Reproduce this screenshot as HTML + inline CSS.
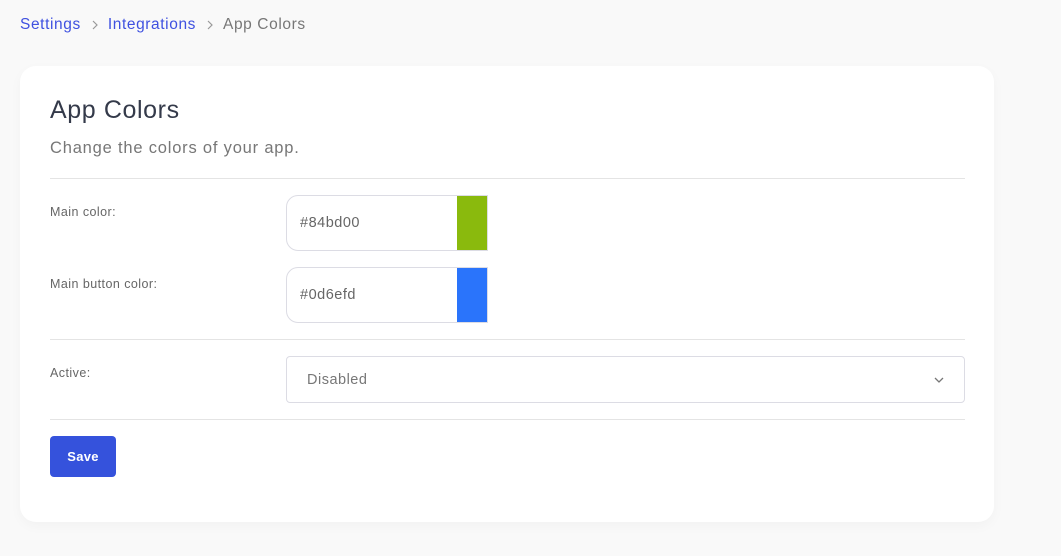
<!DOCTYPE html>
<html><head><style>
*{box-sizing:border-box;margin:0;padding:0}
body{width:1061px;height:556px;background:#f9f9f9;font-family:"Liberation Sans",sans-serif;position:relative;overflow:hidden}
.a{position:absolute}
.bc{top:16px;left:20px;font-size:15.5px;color:#777;letter-spacing:.6px;white-space:nowrap}
.bc span.l{color:#3f51e0}
.bc svg{margin:0 10px 0 11px;vertical-align:-1px}
.card{left:20px;top:66px;width:974px;height:456px;background:#fff;border-radius:16px;box-shadow:0 4px 12px rgba(0,0,0,.03)}
.hr{left:50px;width:915px;height:1px;background:#e4e4e4}
.lbl{font-size:12.5px;color:#666;left:50px;letter-spacing:.45px}
.inp{left:286px;width:202px;height:56px;border:1px solid #dcdce4;border-radius:12px 0 0 12px;overflow:hidden;background:#fff}
.inp .t{position:absolute;left:13px;top:19px;font-size:14.5px;color:#666;letter-spacing:.5px}
.inp .sw{position:absolute;right:0;top:-1px;width:30px;height:56px}
</style></head><body>
<div class="a bc"><span class="l">Settings</span><svg width="6" height="10" viewBox="0 0 6 10"><path d="M1 1l4 4-4 4" fill="none" stroke="#999" stroke-width="1.2"/></svg><span class="l">Integrations</span><svg width="6" height="10" viewBox="0 0 6 10"><path d="M1 1l4 4-4 4" fill="none" stroke="#999" stroke-width="1.2"/></svg>App Colors</div>
<div class="a card"></div>
<div class="a" style="left:50px;top:96px;font-size:25px;color:#343a4a;letter-spacing:.6px">App Colors</div>
<div class="a" style="left:50px;top:139px;font-size:16.5px;color:#777;letter-spacing:.8px">Change the colors of your app.</div>
<div class="a hr" style="top:178px"></div>
<div class="a lbl" style="top:205px">Main color:</div>
<div class="a inp" style="top:195px"><div class="t">#84bd00</div><div class="sw" style="background:#8aba0d"></div></div>
<div class="a lbl" style="top:277px">Main button color:</div>
<div class="a inp" style="top:267px"><div class="t">#0d6efd</div><div class="sw" style="background:#2a74fb"></div></div>
<div class="a hr" style="top:339px"></div>
<div class="a lbl" style="top:366px">Active:</div>
<div class="a" style="left:286px;top:356px;width:679px;height:47px;border:1px solid #dcdce4;border-radius:4px"><div class="a" style="left:20px;top:15px;font-size:14.5px;color:#777;letter-spacing:.5px">Disabled</div>
<svg class="a" style="right:20px;top:19px" width="10" height="8" viewBox="0 0 10 8"><path d="M1 2l4 4 4-4" fill="none" stroke="#777" stroke-width="1.3"/></svg></div>
<div class="a hr" style="top:419px"></div>
<div class="a" style="left:50px;top:436px;width:66px;height:41px;background:#3552dc;border-radius:4px;color:#fff;font-size:13px;font-weight:bold;text-align:center;line-height:41px;letter-spacing:.3px">Save</div>
</body></html>
